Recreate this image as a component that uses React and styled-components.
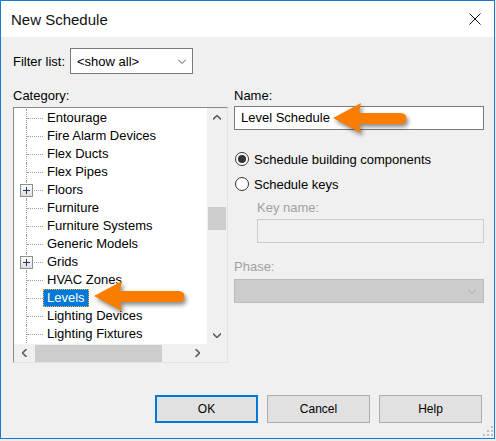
import React from 'react'
import styled, {createGlobalStyle} from 'styled-components'

const GlobalStyle = createGlobalStyle`
  body {
    margin: 0;
    background: #ececec;
    font-family: "Liberation Sans", Arial, sans-serif;
  }
`

const categories = [
  {label: 'Entourage'},
  {label: 'Fire Alarm Devices'},
  {label: 'Flex Ducts'},
  {label: 'Flex Pipes'},
  {label: 'Floors', expandable: true},
  {label: 'Furniture'},
  {label: 'Furniture Systems'},
  {label: 'Generic Models'},
  {label: 'Grids', expandable: true},
  {label: 'HVAC Zones'},
  {label: 'Levels', selected: true},
  {label: 'Lighting Devices'},
  {label: 'Lighting Fixtures'},
]

function Chevron({dir = 'down', color = '#404040', width = 1}) {
  const points = {
    down: '0,0 4,4 8,0',
    up: '0,4 4,0 8,4',
  }
  if (dir === 'left' || dir === 'right') {
    return (
      <svg width="5" height="8" viewBox="0 0 5 8">
        <polyline points={dir === 'left' ? '4.5,0 0.5,4 4.5,8' : '0.5,0 4.5,4 0.5,8'} fill="none" stroke={color} strokeWidth={width} />
      </svg>
    )
  }
  return (
    <svg width="8" height="5" viewBox="0 0 8 5">
      <polyline points={points[dir]} transform="translate(0 0.5)" fill="none" stroke={color} strokeWidth={width} />
    </svg>
  )
}

function Callout({x, y, length}) {
  const d = `M0 15 L28 0 L26 10 H${length - 6} A5.5 5.5 0 0 1 ${length - 6} 21 H26 L28 30 Z`
  return (
    <Arrow.Svg $x={x} $y={y} width={length + 6} height={36} viewBox={`0 0 ${length + 6} 36`}>
      <path d={d} fill="#fb7d00" />
    </Arrow.Svg>
  )
}

export default function App() {
  return (
    <>
      <GlobalStyle />
      <Dialog.Window>
        <Dialog.TitleBar>
          <Dialog.Title>New Schedule</Dialog.Title>
          <svg width="12" height="12" viewBox="0 0 12 12">
            <path d="M0.5 0.5 L11.5 11.5 M11.5 0.5 L0.5 11.5" stroke="#111" strokeWidth="1" />
          </svg>
        </Dialog.TitleBar>

        <Dialog.Body>
          <Filter.Row>
            <span>Filter list:</span>
            <Filter.Select>
              <span>&lt;show all&gt;</span>
              <Chevron dir="down" color="#505050" />
            </Filter.Select>
          </Filter.Row>

          <Dialog.Columns>
            <Dialog.LeftColumn>
              <Field.Label>Category:</Field.Label>
              <Tree.Box>
                <Tree.Items>
                  {categories.map(item => (
                    <Tree.Row key={item.label}>
                      <Tree.Connector>
                        {item.expandable && (
                          <Tree.Plus>
                            <svg width="11" height="11" viewBox="0 0 11 11">
                              <path d="M2 5.5 H9 M5.5 2 V9" stroke="#1c3468" strokeWidth="1" />
                            </svg>
                          </Tree.Plus>
                        )}
                      </Tree.Connector>
                      <Tree.Label $selected={item.selected}>{item.label}</Tree.Label>
                    </Tree.Row>
                  ))}
                </Tree.Items>
                <Scroll.Vertical>
                  <Scroll.Arrow $w={20} $h={18}><Chevron dir="up" color="#606060" width={1.6} /></Scroll.Arrow>
                  <Scroll.Track $vertical>
                    <Scroll.Thumb $vertical $offset={81} $size={23} />
                  </Scroll.Track>
                  <Scroll.Arrow $w={20} $h={18}><Chevron dir="down" color="#606060" width={1.6} /></Scroll.Arrow>
                </Scroll.Vertical>
                <Scroll.Horizontal>
                  <Scroll.Arrow $w={21} $h={18}><Chevron dir="left" color="#606060" width={1.6} /></Scroll.Arrow>
                  <Scroll.Track>
                    <Scroll.Thumb $offset={0} $size={127} />
                  </Scroll.Track>
                  <Scroll.Arrow $w={19} $h={18}><Chevron dir="right" color="#606060" width={1.6} /></Scroll.Arrow>
                </Scroll.Horizontal>
                <Scroll.Corner />
              </Tree.Box>
            </Dialog.LeftColumn>

            <Dialog.RightColumn>
              <Field.Label>Name:</Field.Label>
              <Field.Input>Level Schedule</Field.Input>

              <Radio.Row $top={20}>
                <Radio.Circle $checked />
                <span>Schedule building components</span>
              </Radio.Row>
              <Radio.Row $top={7}>
                <Radio.Circle />
                <span>Schedule keys</span>
              </Radio.Row>

              <Field.Label $disabled $indent={23} $top={7}>Key name:</Field.Label>
              <Field.DisabledInput $indent={23} />

              <Field.Label $disabled $top={16}>Phase:</Field.Label>
              <Field.DisabledSelect>
                <Chevron dir="down" color="#a8a8a8" />
              </Field.DisabledSelect>
            </Dialog.RightColumn>
          </Dialog.Columns>

          <Buttons.Row>
            <Buttons.Button $primary>OK</Buttons.Button>
            <Buttons.Button>Cancel</Buttons.Button>
            <Buttons.Button>Help</Buttons.Button>
          </Buttons.Row>
        </Dialog.Body>

        <Dialog.Grip width="10" height="10" viewBox="0 0 10 10">
          {[[8, 0], [8, 4], [4, 4], [8, 8], [4, 8], [0, 8]].map(([x, y]) => (
            <rect key={`${x}-${y}`} x={x} y={y} width="2" height="2" fill="#bdbdbd" />
          ))}
        </Dialog.Grip>

        <Callout x={332} y={102} length={74} />
        <Callout x={93} y={280} length={91} />
      </Dialog.Window>
    </>
  )
}

const Dialog = {
  Window: styled.div`
    position: relative;
    box-sizing: border-box;
    width: 495px;
    height: 439px;
    border: 1px solid #1979ca;
    background: #f0f0f0;
    display: flex;
    flex-direction: column;
    font-size: 13px;
    color: #000;
  `,
  TitleBar: styled.div`
    flex-shrink: 0;
    height: 36px;
    background: #fff;
    display: flex;
    align-items: center;
    justify-content: space-between;
    padding: 0 13px 0 10px;
  `,
  Title: styled.span`
    font-size: 15px;
    color: #111;
  `,
  Body: styled.div`
    flex: 1;
    display: flex;
    flex-direction: column;
    padding: 11px 10px 15px 12px;
  `,
  Columns: styled.div`
    display: flex;
    gap: 6px;
    margin-top: 14px;
  `,
  LeftColumn: styled.div`
    width: 215px;
    display: flex;
    flex-direction: column;
  `,
  RightColumn: styled.div`
    width: 250px;
    display: flex;
    flex-direction: column;
  `,
  Grip: styled.svg`
    position: absolute;
    right: 1px;
    bottom: 2px;
  `,
}

const Filter = {
  Row: styled.div`
    display: flex;
    align-items: center;
    gap: 5px;
    height: 26px;
  `,
  Select: styled.div`
    box-sizing: border-box;
    width: 123px;
    height: 26px;
    border: 1px solid #7a7a7a;
    background: #fff;
    display: flex;
    align-items: center;
    justify-content: space-between;
    padding: 0 6px 0 6px;
  `,
}

const Field = {
  Label: styled.div`
    height: 15px;
    line-height: 15px;
    margin-top: ${p => p.$top || 0}px;
    margin-left: ${p => p.$indent || 0}px;
    color: ${p => (p.$disabled ? '#a0a0a0' : '#000')};
  `,
  Input: styled.div`
    box-sizing: border-box;
    margin-top: 3px;
    height: 24px;
    line-height: 22px;
    border: 1px solid #7a7a7a;
    background: #fff;
    padding-left: 6px;
  `,
  DisabledInput: styled.div`
    box-sizing: border-box;
    margin-top: 4px;
    margin-left: ${p => p.$indent || 0}px;
    height: 24px;
    border: 1px solid #cccccc;
    background: #f0f0f0;
  `,
  DisabledSelect: styled.div`
    box-sizing: border-box;
    margin-top: 5px;
    height: 24px;
    border: 1px solid #bcbcbc;
    background: #cccccc;
    display: flex;
    align-items: center;
    justify-content: flex-end;
    padding-right: 7px;
  `,
}

const Tree = {
  Box: styled.div`
    box-sizing: border-box;
    margin-top: 4px;
    height: 256px;
    border: 1px solid;
    border-color: #8a8a8a #e3e3e3 #e3e3e3 #8a8a8a;
    background: #fff;
    display: grid;
    grid-template-columns: 1fr 20px;
    grid-template-rows: 1fr 18px;
  `,
  Items: styled.div`
    overflow: hidden;
    padding-top: 1px;
    background: #fff;
  `,
  Row: styled.div`
    display: flex;
    align-items: center;
    height: 18px;
    white-space: nowrap;
  `,
  Connector: styled.div`
    position: relative;
    flex-shrink: 0;
    width: 29px;
    height: 18px;
    &::before {
      content: '';
      position: absolute;
      left: 12px;
      top: 0;
      bottom: 0;
      border-left: 1px dotted #a0a0a0;
    }
    &::after {
      content: '';
      position: absolute;
      left: 13px;
      top: 9px;
      width: 16px;
      border-top: 1px dotted #a0a0a0;
    }
  `,
  Plus: styled.div`
    position: absolute;
    z-index: 1;
    left: 6px;
    top: 3px;
    box-sizing: border-box;
    width: 13px;
    height: 13px;
    border: 1px solid #8f8f8f;
    background: linear-gradient(#ffffff, #dedede);
    display: flex;
  `,
  Label: styled.span`
    height: 18px;
    line-height: 18px;
    padding: 0 4px;
    background: ${p => (p.$selected ? '#0078d7' : 'transparent')};
    color: ${p => (p.$selected ? '#fff' : '#000')};
    outline: ${p => (p.$selected ? '1px dotted #f0b040' : 'none')};
    outline-offset: -1px;
  `,
}

const Scroll = {
  Vertical: styled.div`
    background: #f0f0f0;
    display: flex;
    flex-direction: column;
  `,
  Horizontal: styled.div`
    background: #f0f0f0;
    display: flex;
  `,
  Corner: styled.div`
    background: #f0f0f0;
  `,
  Arrow: styled.div`
    flex-shrink: 0;
    width: ${p => p.$w}px;
    height: ${p => p.$h}px;
    display: flex;
    align-items: center;
    justify-content: center;
  `,
  Track: styled.div`
    flex: 1;
    display: flex;
    flex-direction: ${p => (p.$vertical ? 'column' : 'row')};
  `,
  Thumb: styled.div`
    background: #cdcdcd;
    ${p => (p.$vertical
      ? `margin: ${p.$offset}px 1px 0; height: ${p.$size}px;`
      : `margin: 1px 0 0 ${p.$offset}px; width: ${p.$size}px;`)}
  `,
}

const Radio = {
  Row: styled.div`
    display: flex;
    align-items: center;
    gap: 5px;
    height: 18px;
    margin-top: ${p => p.$top}px;
  `,
  Circle: styled.span`
    box-sizing: border-box;
    width: 14px;
    height: 14px;
    margin-left: 1px;
    border-radius: 50%;
    border: 1px solid #333;
    background: #fff;
    display: flex;
    align-items: center;
    justify-content: center;
    &::after {
      content: '';
      width: 8px;
      height: 8px;
      border-radius: 50%;
      background: ${p => (p.$checked ? '#333' : 'transparent')};
    }
  `,
}

const Buttons = {
  Row: styled.div`
    margin-top: auto;
    display: flex;
    justify-content: flex-end;
    gap: 9px;
    padding-right: 2px;
  `,
  Button: styled.div`
    box-sizing: border-box;
    width: 103px;
    height: 28px;
    background: #e1e1e1;
    border: ${p => (p.$primary ? '2px solid #0078d7' : '1px solid #adadad')};
    display: flex;
    align-items: center;
    justify-content: center;
    font-size: 12px;
  `,
}

const Arrow = {
  Svg: styled.svg`
    position: absolute;
    left: ${p => p.$x}px;
    top: ${p => p.$y}px;
    overflow: visible;
    filter: drop-shadow(2px 3px 2px rgba(0, 0, 0, 0.45));
  `,
}
